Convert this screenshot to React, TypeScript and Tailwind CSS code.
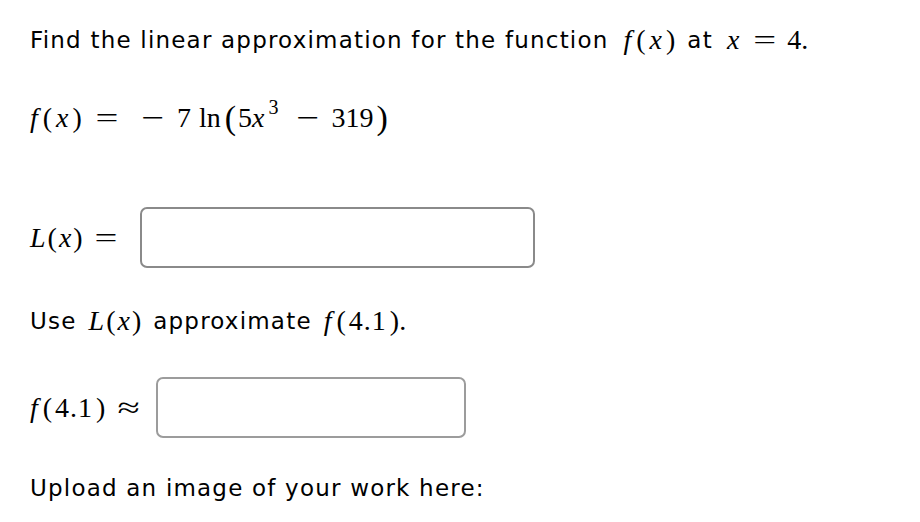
import React from 'react';

// KaTeX-like inline math pieces
const mathFont = "font-['Liberation_Serif',serif]";

function V({ children, className = '' }: { children: React.ReactNode; className?: string }) {
    return <span className={`italic ${mathFont} ${className}`}>{children}</span>;
}

// operator glyph stretched into a fixed-width slot (Times glyphs are narrower than Computer Modern)
function Op({ ch, className }: { ch: string; className: string }) {
    return (
        <span className={`inline-block text-center ${mathFont} text-[28px] ${className}`}>
            <span className="inline-block scale-x-[1.45]">{ch}</span>
        </span>
    );
}

function Fx({ arg, name = 'f', argClass = 'mx-[2px]' }: { arg: React.ReactNode; name?: string; argClass?: string }) {
    return (
        <span className={`${mathFont} text-[28px] tracking-normal`}>
            <V className={name === 'f' ? 'mr-[5px]' : 'mr-[2px]'}>{name}</V>
            <span className={mathFont}>(</span>
            <span className={`inline-block ${mathFont} ${argClass}`}>{arg}</span>
            <span className={mathFont}>)</span>
        </span>
    );
}

function AnswerBox({ width, border }: { width: string; border: string }) {
    return <div className={`h-[61px] shrink-0 rounded-[7px] border-2 bg-white ${width} ${border}`}></div>;
}

export default function App() {
    return (
        <div className="min-h-[522px] w-[920px] bg-white px-[30px] pt-[24px] text-black font-['DejaVu_Sans',sans-serif] text-[23px] tracking-[1.2px]">
            {/* Prompt */}
            <div className="flex h-[32px] items-center whitespace-nowrap">
                <span>Find the linear approximation for the function</span>
                <span className="ml-[15px]">
                    <Fx arg={<V>x</V>} argClass="mx-[4px]" />
                </span>
                <span className="ml-[12px]">at</span>
                <span className={`${mathFont} ml-[14px] text-[28px] tracking-normal`}>
                    <V>x</V>
                </span>
                <Op ch="=" className="ml-[14px] w-[24px]" />
                <span className={`${mathFont} ml-[10px] text-[28px] tracking-normal`}>4.</span>
            </div>

            {/* Function */}
            <div className={`mt-[42px] flex h-[40px] items-center whitespace-nowrap tracking-normal ${mathFont} text-[28px]`}>
                <Fx arg={<V>x</V>} argClass="mx-[4px]" />
                <Op ch="=" className="ml-[13px] w-[24px]" />
                <Op ch="−" className="ml-[24px] w-[21px]" />
                <span className="ml-[13px]">7</span>
                <span className="ml-[8px]">ln</span>
                <span className="ml-[4px] text-[34px] leading-none">(</span>
                <span className="ml-[2px]">5</span>
                <V>x</V>
                <span className="relative -top-[11px] ml-[4px] text-[20px]">3</span>
                <Op ch="−" className="ml-[19px] w-[21px]" />
                <span className="ml-[13px]">319</span>
                <span className="ml-[3px] text-[34px] leading-none">)</span>
            </div>

            {/* L(x) input */}
            <div className="mt-[69px] flex items-center whitespace-nowrap tracking-normal">
                <Fx name="L" arg={<V>x</V>} argClass="mx-[2px]" />
                <Op ch="=" className="ml-[12px] mr-[22px] w-[23px]" />
                <AnswerBox width="w-[395px]" border="border-[#8a8a8a]" />
            </div>

            {/* Use L(x) */}
            <div className="mt-[37px] flex h-[32px] items-center whitespace-nowrap">
                <span>Use</span>
                <span className="ml-[12px]">
                    <Fx name="L" arg={<V>x</V>} argClass="mx-[2px]" />
                </span>
                <span className="ml-[12px]">approximate</span>
                <span className="ml-[12px]">
                    <Fx arg={<span className="tracking-[1px]">4.1</span>} argClass="mx-[3px]" />
                    <span className={`${mathFont} text-[28px]`}>.</span>
                </span>
            </div>

            {/* f(4.1) input */}
            <div className="mt-[40px] flex items-center whitespace-nowrap tracking-normal">
                <Fx arg={<span className="tracking-[1px]">4.1</span>} argClass="mx-[3px]" />
                <Op ch="≈" className="ml-[10px] mr-[14px] w-[27px]" />
                <AnswerBox width="w-[310px]" border="border-[#9c9c9c]" />
            </div>

            {/* Upload */}
            <div className="mt-[34px] flex h-[32px] items-center whitespace-nowrap">
                <span>Upload an image of your work here:</span>
            </div>
        </div>
    );
}
